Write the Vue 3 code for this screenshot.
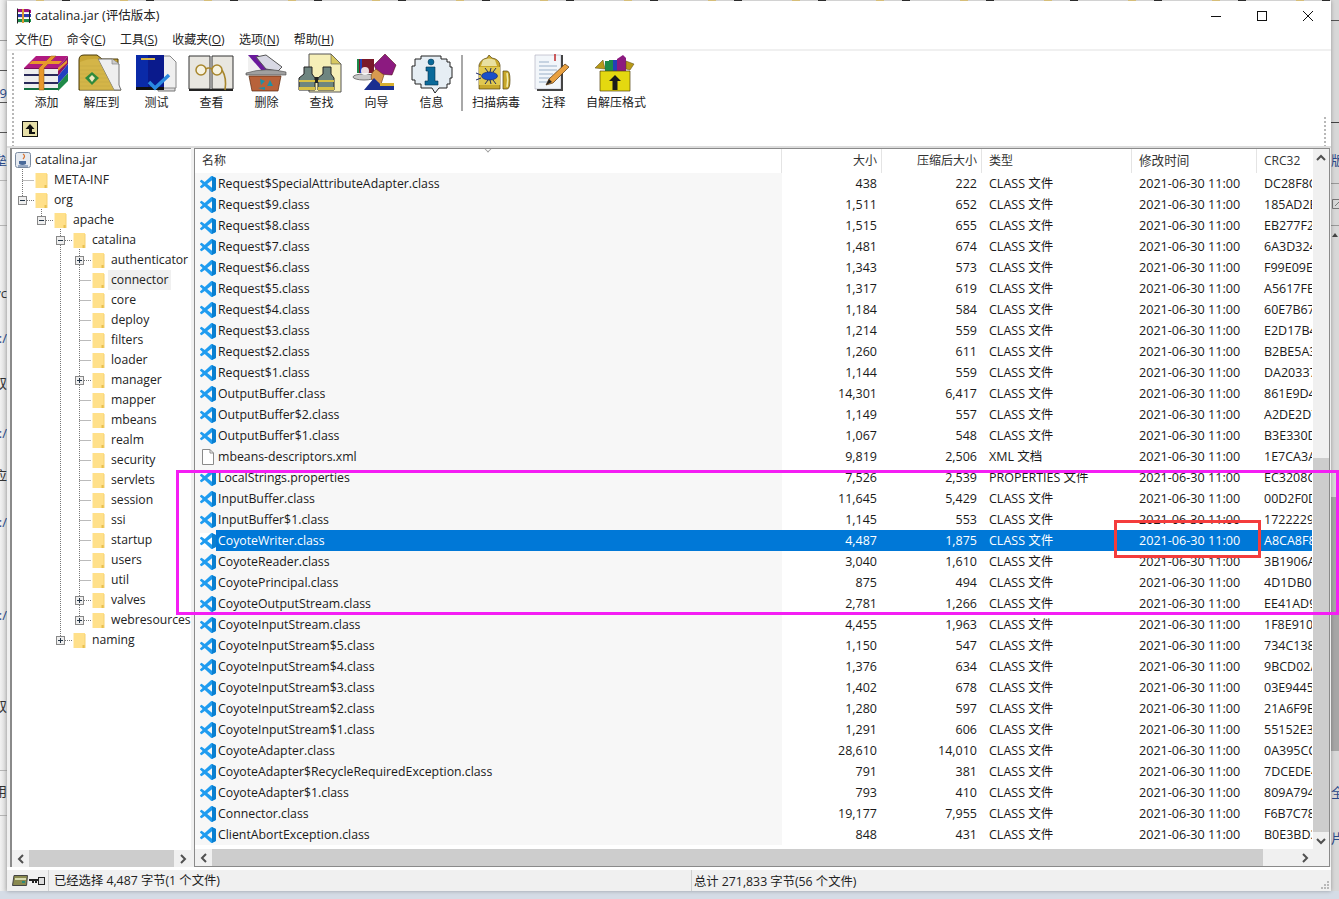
<template>
  <div class="desk">
    <div class="topstrip"></div>
    <div class="side left">
      <span class="bit" v-for="b in leftBits" :key="b.y" :class="{ dark: b.dark }" :style="{ top: b.y + 'px' }">{{ b.t }}</span>
    </div>
    <div class="side right">
      <span class="backthumb"></span>
      <svg class="backicon" width="8" height="12" viewBox="0 0 8 12"><path d="M8 1.500H1.500v9H8M4 8l4-4" stroke="#777" fill="none" /></svg>
      <span class="backup"></span>
      <span class="bit" v-for="b in rightBits" :key="b.y" :style="{ top: b.y + 'px' }">{{ b.t }}</span>
    </div>

    <div class="window">
      <div class="titlebar">
        <svg class="appicon" viewBox="0 0 16 16" width="16" height="16">
          <path d="M2 1h10l3 1v3H2z" fill="#a0137c" />
          <path d="M2 4h11v1H2zM2 9h11v1H2zM2 14h11v1H2z" fill="#e8e8e8" />
          <path d="M2 6h13v3H2z" fill="#2a3cb0" />
          <path d="M2 11h13v3H2z" fill="#1d8a4a" />
          <path d="M1.500 .5v15M13.500 2v13" stroke="#222" fill="none" />
          <path d="M6 1h2v14H6z" fill="#d89a30" />
        </svg>
        <span class="title">catalina.jar (评估版本)</span>
        <div class="winbtns">
          <svg width="46" height="30" viewBox="0 0 46 30"><path d="M18 15.500h10" stroke="#111" fill="none" /></svg>
          <svg width="46" height="30" viewBox="0 0 46 30"><rect x="18.500" y="10.500" width="9" height="9" stroke="#111" fill="none" /></svg>
          <svg width="46" height="30" viewBox="0 0 46 30"><path d="M18 10l10 10M28 10L18 20" stroke="#111" fill="none" /></svg>
        </div>
      </div>

      <div class="menubar">
        <span v-for="m in menus" :key="m.label" class="menu">{{ m.label }}(<u>{{ m.key }}</u>)</span>
      </div>

      <div class="toolarea">
        <div class="grip"></div>
        <div class="toolstack">
          <div class="toolbar">
            <template v-for="t in tools" :key="t.id">
              <div v-if="t.id === 'sep'" class="toolsep"></div>
              <div v-else class="tool" :style="{ width: t.w + 'px' }">
                <svg class="toolicon" viewBox="0 0 48 40" width="48" height="40">
                  <g v-if="t.id === 'add'">
                    <path d="M2 15h34v22H2z" fill="#eee" />
                    <path d="M2 15L14 3h32L36 15z" fill="#b01a80" />
                    <path d="M2 21h34v2H2zM2 29h34v2H2z" fill="#2a2a5a" />
                    <path d="M2 15h34v1H2z" fill="#7a0f5c" />
                    <path d="M2 35h34v2H2z" fill="#147040" />
                    <path d="M36 15L46 3v8L36 23z" fill="#8c1268" />
                    <path d="M36 23l10-12v9L36 31z" fill="#2440c0" />
                    <path d="M36 31l10-11v8L36 38z" fill="#1f8a48" />
                    <path d="M17 15L29 3h5L22 15v22h-5z" fill="#e8982c" stroke="#8a5a10" stroke-width=".5" />
                    <path d="M7 11h30l3-3H10z" fill="#e8982c" />
                    <path d="M36 15l9-8v3l-9 8z" fill="#e8982c" />
                  </g>
                  <g v-else-if="t.id === 'extract'">
                    <path d="M2 7q0-5 5-5h13l5 4 16 0v27l3 4H2z" fill="#c8a636" stroke="#4a3a08" />
                    <path d="M3 13h30M3 17h30M3 21h30M3 25h30M3 29h30M3 33h30" stroke="#a88a28" />
                    <path d="M21 6h14l7 5v21l2 5h-7z" fill="#eeeeee" stroke="#777" />
                    <path d="M35 6v5h7" fill="#ccc" stroke="#777" stroke-width=".6" />
                    <path d="M21 6l16 31H3V9q9-4 18-3z" fill="#d8bc50" opacity=".7" />
                    <path d="M15 19l7 6-7 7-7-7z" fill="#2f8a3c" />
                    <path d="M15 22l3 3-3 4-3-4z" fill="#f0e8c0" />
                  </g>
                  <g v-else-if="t.id === 'test'">
                    <path d="M26 6h10l7 6v26H26z" fill="#dcdcdc" stroke="#777" />
                    <path d="M30 3h8l6 6v26H30z" fill="#efefef" stroke="#888" />
                    <path d="M4 2h28v32H4z" fill="#0a1a8c" />
                    <path d="M4 2h12v32H4z" fill="#0a2aa8" />
                    <path d="M9 6h14" stroke="#d8b84a" stroke-width="2" />
                    <path d="M4 34h28v3H4z" fill="#111" />
                    <path d="M17 29l6 6 14-13" stroke="#2a8ae0" stroke-width="3.500" fill="none" />
                  </g>
                  <g v-else-if="t.id === 'view'">
                    <path d="M2 3h21v33H2zM25 3h21v33H25z" fill="#e8e6e0" stroke="#333" />
                    <path d="M23 3h2v33h-2z" fill="#999" />
                    <path d="M2 36h44v2H2z" fill="#222" />
                    <circle cx="14" cy="17" r="5" fill="#f6f2e0" stroke="#a8862c" stroke-width="1.500" />
                    <circle cx="30" cy="17" r="5" fill="#f6f2e0" stroke="#a8862c" stroke-width="1.500" />
                    <path d="M19 16q2-2 6 0M35 17q5 8 3 20" stroke="#a8862c" stroke-width="1.600" fill="none" />
                  </g>
                  <g v-else-if="t.id === 'del'">
                    <path d="M6 2h10l14 16H6z" fill="#6a1a9c" />
                    <path d="M6 2l14 16H6z" fill="#f0f0f0" />
                    <path d="M14 4l10-2 16 12-4 4-12-2z" fill="#d8d8e4" stroke="#555" />
                    <path d="M4 20q20-6 40-1v3H4z" fill="#a0a0a0" stroke="#444" stroke-width=".6" />
                    <path d="M7 23h32l-3 15H10z" fill="#b8623a" stroke="#5a2a10" stroke-width=".7" />
                    <path d="M18 26l5 2-4 4zM28 27l3 6-6 0zM16 35l7-1 0 3z" fill="#1a90a8" />
                  </g>
                  <g v-else-if="t.id === 'find'">
                    <path d="M12 1h22l10 10v28H12z" fill="#f6efb8" stroke="#555" />
                    <path d="M34 1v10h10z" fill="#d8c860" stroke="#555" stroke-width=".6" />
                    <path d="M7 14h8v7l3 4v12H2V25l5-4z" fill="#6e8580" stroke="#222" />
                    <path d="M26 14h8v7l3 4v12H21V25l5-4z" fill="#6e8580" stroke="#222" />
                    <path d="M2 27h16v2H2zM21 27h16v2H21zM2 34h16v3H2zM21 34h16v3H21z" fill="#d8c048" />
                    <path d="M18 24h3v6h-3z" fill="#222" />
                  </g>
                  <g v-else-if="t.id === 'wizard'">
                    <path d="M5 6h17v14H5z" fill="#7a1a2a" />
                    <path d="M5 6h2v14H5z" fill="#1d8a4a" />
                    <path d="M8 6h2v14H8z" fill="#2440b8" />
                    <ellipse cx="12" cy="24" rx="11" ry="3" fill="#c8c8c8" stroke="#777" />
                    <circle cx="13" cy="18" r="4" fill="#fff" opacity=".85" />
                    <path d="M22 12L33 1l11 11-4 10-14-1z" fill="#8c1a80" stroke="#400" stroke-width=".5" />
                    <path d="M24 16l8 6-3 9-9-4q-3-6 4-11z" fill="#d89a50" stroke="#6a3a10" stroke-width=".6" />
                    <path d="M12 37l10-12 8 8 12-2v6z" fill="#1a2f90" />
                    <path d="M28 30h14v3H28z" fill="#d8b030" />
                  </g>
                  <g v-else-if="t.id === 'info'">
                    <path d="M8 6h6V3h20v3h6v3h3v5h2v11h-2v6h-3v4H32l-4 5-3-5H14v-4H8v-4H5V13h3z" fill="#e6eef4" stroke="#222" />
                    <circle cx="24" cy="9" r="3" fill="#0a6a9a" stroke="#03304a" stroke-width=".5" />
                    <path d="M19 14h9v14h3v4H18v-4h3v-10h-2z" fill="#0a6a9a" stroke="#03304a" stroke-width=".6" />
                  </g>
                  <g v-else-if="t.id === 'scan'">
                    <path d="M8 12q2-6 8-7l2-3 3 3q7 1 8 7v24H8z" fill="#c8a82c" stroke="#554410" stroke-width=".7" />
                    <path d="M12 7q6-3 12 0l2 6H10z" fill="#e8e0a0" />
                    <path d="M8 14h21v18H8z" fill="#e0c850" />
                    <ellipse cx="18.500" cy="23" rx="8" ry="4" fill="#1a50c8" stroke="#0a1a60" stroke-width=".6" />
                    <path d="M14 15l3 4M20 15l-1 4M25 15l-3 4M14 31l3-4M20 31l-1-4M25 31l-3-4M5 20l5 2M5 27l5-2" stroke="#0a1a60" stroke-width=".9" />
                    <path d="M32 18h4q3 0 3 9t-3 9h-4z" fill="#c8a82c" stroke="#554410" stroke-width=".7" />
                    <path d="M36 20q1.500 7 0 14" stroke="#f4f0b0" stroke-width="1.500" fill="none" />
                  </g>
                  <g v-else-if="t.id === 'note'">
                    <path d="M6 2h26v34H6z" fill="#f2f6fa" stroke="#aab" stroke-width=".6" />
                    <path d="M32 2h2v36H8v-2h24z" fill="#444" />
                    <path d="M10 9h10M10 13h18M10 17h18M10 21h14M10 25h12M10 29h8" stroke="#9ab0c8" />
                    <path d="M26 1v7" stroke="#c02a2a" stroke-width="1.500" />
                    <path d="M17 32l3-6 16-15 4 3-16 16z" fill="#e8a040" stroke="#553310" stroke-width=".7" />
                    <path d="M17 32l3-6 3 3z" fill="#222" />
                  </g>
                  <g v-else-if="t.id === 'sfx'">
                    <path d="M14 8h4v14h-4zM18 7h4v15h-4z" fill="#1d8a4a" />
                    <path d="M22 7h4v15h-4z" fill="#2440b8" />
                    <path d="M26 6l6-4 3 3v17h-9z" fill="#8c1a80" />
                    <path d="M4 15l8-8 2 9zM35 8l8 3-4 6-4-1z" fill="#b89a18" stroke="#554410" stroke-width=".5" />
                    <path d="M9 18h30v20H9z" fill="#e4d810" stroke="#554410" stroke-width=".7" />
                    <path d="M24 22l6 6h-3.500v9h-5v-9H18z" fill="#1a1a1a" />
                  </g>
                </svg>
                <span class="toollabel">{{ t.label }}</span>
              </div>
            </template>
          </div>
          <div class="upbar">
            <svg width="16" height="16" viewBox="0 0 16 16">
              <rect x=".5" y=".5" width="15" height="15" fill="#e6dfa8" stroke="#111" />
              <path d="M8 3l4.500 5H10v3h3v2H7V8H3.500z" fill="#111" />
            </svg>
          </div>
        </div>
        <div class="grip endgrip"></div>
      </div>

      <div class="panes">
        <div class="treepane">
          <div class="treebody">
            <svg class="treelines" width="180" height="500">
              <path :d="treeLines" stroke="#777" stroke-dasharray="1 1" fill="none" />
            </svg>
            <div class="node" v-for="n in tree" :key="n.name">
              <span v-if="!n.root" class="spacer" :style="{ width: n.depth * 19 + 'px' }"></span>
              <span v-if="!n.root" class="toggle">
                <svg v-if="n.toggle" width="9" height="9" viewBox="0 0 9 9">
                  <rect x=".5" y=".5" width="8" height="8" fill="#eee" stroke="#888" />
                  <path d="M2 4.500h5" stroke="#234" />
                  <path v-if="n.toggle === 'plus'" d="M4.500 2v5" stroke="#234" />
                </svg>
              </span>
              <svg v-if="n.root" class="jaricon" width="16" height="16" viewBox="0 0 16 16">
                <rect x=".5" y=".5" width="15" height="15" rx="2" fill="#e6eaf0" stroke="#7a8aa0" />
                <path d="M8 2q3 2 0 5" stroke="#d8702a" fill="none" stroke-width="1.200" />
                <path d="M4 9h7v3q-3.500 2-7 0z" fill="#4a6a9a" />
                <path d="M3 14h10" stroke="#4a6a9a" />
              </svg>
              <svg v-else class="foldericon" width="13" height="16" viewBox="0 0 13 16">
                <path d="M.5 1h11.500v15H.5z" fill="#ffe08a" />
                <path d="M9.500 13h2.500v3H9.500z" fill="#e8c050" />
                <path d="M11.500 2h1v14h-1z" fill="#f6d272" />
              </svg>
              <span class="nodename" :class="{ current: n.name === 'connector', rootname: n.root }">{{ n.name }}</span>
            </div>
          </div>
          <div class="hscroll">
            <span class="arrow"><svg width="8" height="10" viewBox="0 0 8 10"><path d="M6 1L2 5l4 4" stroke="#505050" stroke-width="2" fill="none" /></svg></span>
            <span class="thumb"></span>
            <span class="arrow"><svg width="8" height="10" viewBox="0 0 8 10"><path d="M2 1l4 4-4 4" stroke="#505050" stroke-width="2" fill="none" /></svg></span>
          </div>
        </div>

        <div class="listpane">
          <div class="listmain">
            <div class="listhead">
              <div class="cell col-name hcell">名称<span class="sortmark"></span></div>
              <div class="cell col-size hcell num">大小</div>
              <div class="cell col-packed hcell num">压缩后大小</div>
              <div class="cell col-type hcell">类型</div>
              <div class="cell col-time hcell">修改时间</div>
              <div class="cell col-crc hcell">CRC32</div>
            </div>
            <div class="listrows">
              <div class="row" v-for="f in files" :key="f.name" :class="{ selected: f.name === selectedName }">
                <div class="cell col-name namecell">
                  <svg v-if="f.kind === 'class' || f.kind === 'prop'" class="fileicon" width="16" height="16" viewBox="0 0 24 24">
                    <path d="M23.150 2.587L18.210.21a1.494 1.494 0 0 0-1.705.29l-9.460 8.630-4.120-3.128a.999.999 0 0 0-1.276.057L.327 7.261A1 1 0 0 0 .326 8.740L3.899 12 .326 15.260a1 1 0 0 0 .001 1.479L1.650 17.940a.999.999 0 0 0 1.276.057l4.120-3.128 9.460 8.630a1.492 1.492 0 0 0 1.704.29l4.942-2.377A1.500 1.500 0 0 0 24 20.060V3.939a1.500 1.500 0 0 0-.850-1.352zm-5.146 14.861L10.826 12l7.178-5.448v10.896z" fill="#1f9cf0" />
                    <path d="M18 .12l5.150 2.467A1.500 1.500 0 0 1 24 3.939v16.121a1.500 1.500 0 0 1-.850 1.352L18 23.880z" fill="#0a7fd0" />
                  </svg>
                  <svg v-else class="fileicon" width="16" height="16" viewBox="0 0 16 16">
                    <path d="M2.500 .5h7.500l3.500 3.500v11.500h-11z" fill="#fff" stroke="#8a8a8a" />
                    <path d="M10 .5v3.500h3.500" fill="none" stroke="#8a8a8a" />
                  </svg>
                  <span class="fname">{{ f.name }}</span>
                </div>
                <div class="cell col-size num">{{ f.size }}</div>
                <div class="cell col-packed num">{{ f.packed }}</div>
                <div class="cell col-type">{{ f.type }}</div>
                <div class="cell col-time">2021-06-30 11:00</div>
                <div class="cell col-crc">{{ f.crc }}</div>
              </div>
            </div>
            <div class="hscroll listscroll">
              <span class="arrow"><svg width="8" height="10" viewBox="0 0 8 10"><path d="M6 1L2 5l4 4" stroke="#505050" stroke-width="2" fill="none" /></svg></span>
              <span class="thumb"></span>
              <span class="arrow"><svg width="8" height="10" viewBox="0 0 8 10"><path d="M2 1l4 4-4 4" stroke="#505050" stroke-width="2" fill="none" /></svg></span>
            </div>
          </div>
          <div class="vscroll">
            <span class="varrow"><svg width="10" height="8" viewBox="0 0 10 8"><path d="M1 6l4-4 4 4" stroke="#505050" stroke-width="2" fill="none" /></svg></span>
            <span class="vgap"></span>
            <span class="vthumb"></span>
            <span class="varrow"><svg width="10" height="8" viewBox="0 0 10 8"><path d="M1 2l4 4 4-4" stroke="#505050" stroke-width="2" fill="none" /></svg></span>
            <span class="vcorner"></span>
          </div>
        </div>
      </div>

      <div class="statusbar">
        <div class="status-icons">
          <svg width="16" height="11" viewBox="0 0 16 11">
            <path d="M2 .5h13.500l-1 10H.5z" fill="#8a8a50" stroke="#444" />
            <rect x="3" y="3" width="11" height="2" fill="#d8dcb0" />
            <rect x="10" y="6" width="3" height="2" fill="#2a8a7a" />
          </svg>
          <svg width="16" height="8" viewBox="0 0 16 8">
            <path d="M0 2h9v2H8v2H6V4H5v2H3V4H0z" fill="#222" />
            <rect x="9.500" y=".5" width="6" height="7" fill="#ddd" stroke="#222" />
          </svg>
        </div>
        <div class="status-left">已经选择 4,487 字节(1 个文件)</div>
        <div class="status-right">总计 271,833 字节(56 个文件)</div>
        <svg class="sizegrip" width="10" height="10" viewBox="0 0 10 10">
          <path d="M7 1h2v2H7zM4 4h2v2H4zM7 4h2v2H7zM1 7h2v2H1zM4 7h2v2H4zM7 7h2v2H7z" fill="#b8b8b8" />
        </svg>
      </div>
    </div>

    <div class="mark magenta"></div>
    <div class="mark red"></div>
  </div>
</template>

<script setup>
const menus = [
  { label: '文件', key: 'F' },
  { label: '命令', key: 'C' },
  { label: '工具', key: 'S' },
  { label: '收藏夹', key: 'O' },
  { label: '选项', key: 'N' },
  { label: '帮助', key: 'H' }
];

const tools = [
  { id: 'add', label: '添加', w: 55 },
  { id: 'extract', label: '解压到', w: 55 },
  { id: 'test', label: '测试', w: 55 },
  { id: 'view', label: '查看', w: 55 },
  { id: 'del', label: '删除', w: 55 },
  { id: 'find', label: '查找', w: 55 },
  { id: 'wizard', label: '向导', w: 55 },
  { id: 'info', label: '信息', w: 55 },
  { id: 'sep' },
  { id: 'scan', label: '扫描病毒', w: 60 },
  { id: 'note', label: '注释', w: 55 },
  { id: 'sfx', label: '自解压格式', w: 70 }
];

const tree = [
  { name: 'catalina.jar', depth: 0, root: true },
  { name: 'META-INF', depth: 0 },
  { name: 'org', depth: 0, toggle: 'minus' },
  { name: 'apache', depth: 1, toggle: 'minus' },
  { name: 'catalina', depth: 2, toggle: 'minus' },
  { name: 'authenticator', depth: 3, toggle: 'plus' },
  { name: 'connector', depth: 3 },
  { name: 'core', depth: 3 },
  { name: 'deploy', depth: 3 },
  { name: 'filters', depth: 3 },
  { name: 'loader', depth: 3 },
  { name: 'manager', depth: 3, toggle: 'plus' },
  { name: 'mapper', depth: 3 },
  { name: 'mbeans', depth: 3 },
  { name: 'realm', depth: 3 },
  { name: 'security', depth: 3 },
  { name: 'servlets', depth: 3 },
  { name: 'session', depth: 3 },
  { name: 'ssi', depth: 3 },
  { name: 'startup', depth: 3 },
  { name: 'users', depth: 3 },
  { name: 'util', depth: 3 },
  { name: 'valves', depth: 3, toggle: 'plus' },
  { name: 'webresources', depth: 3, toggle: 'plus' },
  { name: 'naming', depth: 2, toggle: 'plus' }
];

// dotted guides of the tree, offsets relative to the tree body
const treeLines = (() => {
  let d = 'M11.500 19V46M11.500 30.500H23M16 50.500H23M30.500 55V66M35 70.500H42M49.500 75V486M54 90.500H61M54 490.500H61M68.500 95V466';
  for (let i = 5; i < 24; i++) {
    const start = tree[i].toggle ? 73 : 68.5;
    d += `M${start} ${i * 20 + 10.5}H80`;
  }
  return d;
})();

const leftBits = [
  { y: 85, t: '9' }, { y: 152, t: '垒' }, { y: 285, t: 'vc', dark: true }, { y: 330, t: ':/' },
  { y: 375, t: '双', dark: true }, { y: 425, t: ':/' }, { y: 467, t: '应', dark: true }, { y: 514, t: ':/' },
  { y: 607, t: ':/' }, { y: 698, t: '双', dark: true }, { y: 783, t: '用', dark: true }
];
const rightBits = [
  { y: 152, t: '版' }, { y: 784, t: '全' }, { y: 830, t: '片' }
];

const mk = (name, size, packed, crc, type = 'CLASS 文件', kind = 'class') => ({ name, size, packed, crc, type, kind });

const selectedName = 'CoyoteWriter.class';

const files = [
  mk('Request$SpecialAttributeAdapter.class', '438', '222', 'DC28F8C'),
  mk('Request$9.class', '1,511', '652', '185AD2E'),
  mk('Request$8.class', '1,515', '655', 'EB277F2'),
  mk('Request$7.class', '1,481', '674', '6A3D324'),
  mk('Request$6.class', '1,343', '573', 'F99E09E'),
  mk('Request$5.class', '1,317', '619', 'A5617FE'),
  mk('Request$4.class', '1,184', '584', '60E7B67'),
  mk('Request$3.class', '1,214', '559', 'E2D17B4'),
  mk('Request$2.class', '1,260', '611', 'B2BE5A3'),
  mk('Request$1.class', '1,144', '559', 'DA20337'),
  mk('OutputBuffer.class', '14,301', '6,417', '861E9D4'),
  mk('OutputBuffer$2.class', '1,149', '557', 'A2DE2D7'),
  mk('OutputBuffer$1.class', '1,067', '548', 'B3E330D'),
  mk('mbeans-descriptors.xml', '9,819', '2,506', '1E7CA3A', 'XML 文档', 'xml'),
  mk('LocalStrings.properties', '7,526', '2,539', 'EC3208C', 'PROPERTIES 文件', 'prop'),
  mk('InputBuffer.class', '11,645', '5,429', '00D2F0D'),
  mk('InputBuffer$1.class', '1,145', '553', '1722229'),
  mk('CoyoteWriter.class', '4,487', '1,875', 'A8CA8F8'),
  mk('CoyoteReader.class', '3,040', '1,610', '3B1906A'),
  mk('CoyotePrincipal.class', '875', '494', '4D1DB07'),
  mk('CoyoteOutputStream.class', '2,781', '1,266', 'EE41AD9'),
  mk('CoyoteInputStream.class', '4,455', '1,963', '1F8E910'),
  mk('CoyoteInputStream$5.class', '1,150', '547', '734C138'),
  mk('CoyoteInputStream$4.class', '1,376', '634', '9BCD02A'),
  mk('CoyoteInputStream$3.class', '1,402', '678', '03E9445'),
  mk('CoyoteInputStream$2.class', '1,280', '597', '21A6F9B'),
  mk('CoyoteInputStream$1.class', '1,291', '606', '55152E3'),
  mk('CoyoteAdapter.class', '28,610', '14,010', '0A395CC'),
  mk('CoyoteAdapter$RecycleRequiredException.class', '791', '381', '7DCEDE4'),
  mk('CoyoteAdapter$1.class', '793', '410', '809A794'),
  mk('Connector.class', '19,177', '7,955', 'F6B7C78'),
  mk('ClientAbortException.class', '848', '431', 'B0E3BD3')
];
</script>

<style scoped>
.desk {
  position: relative;
  width: 1339px;
  height: 899px;
  overflow: hidden;
  background: #d5dce6;
  font-family: "Open Sans", "Noto Sans", "Noto Sans CJK SC", sans-serif;
  font-size: 12.5px;
  color: #1a1a1a;
}

.topstrip {
  position: absolute;
  left: 0;
  top: 0;
  right: 0;
  height: 2px;
  background: repeating-linear-gradient(90deg, #f0f0f0 0 36px, #f4d98a 36px 44px, #f0f0f0 44px 62px, #333 62px 70px, #f0f0f0 70px 84px);
}

.side {
  position: absolute;
  top: 0;
  bottom: 8px;
  overflow: hidden;
}

.side.left {
  left: 0;
  width: 7px;
  background:
    linear-gradient(180deg, transparent 40px, #9a9a9a 40px 41px, transparent 41px 70px, #555 70px 71px, transparent 71px 102px, #555 102px 103px, transparent 103px 132px, #555 132px 133px, transparent 133px 180px, #b5b5b5 180px 181px, transparent 181px 225px, #b5b5b5 225px 226px, transparent 226px 770px, #b5b5b5 770px 771px, transparent 771px 815px, #b5b5b5 815px 816px, transparent 816px),
    linear-gradient(90deg, #f2f2f2, #d8d8d8);
}

.side.right {
  right: 0;
  width: 8px;
  background:
    linear-gradient(180deg, #d8d8d8 20px, #555 20px 21px, #d8d8d8 21px 122px, #444 122px 123px, #d8d8d8 123px 183px, #999 183px 184px, #d8d8d8 184px 225px, #999 225px 226px, #d8d8d8 226px);
}

.backthumb {
  position: absolute;
  left: 0;
  top: 497px;
  width: 8px;
  height: 254px;
  background: #a6a6a6;
}

.backicon {
  position: absolute;
  left: 0;
  top: 198px;
}

.backup {
  position: absolute;
  left: 1px;
  top: 233px;
  border-left: 3px solid transparent;
  border-right: 3px solid transparent;
  border-bottom: 4px solid #444;
}

.bit {
  position: absolute;
  color: #2a4a8a;
  font-size: 13px;
  line-height: 16px;
  white-space: nowrap;
}

.bit.dark {
  color: #333;
}

.left .bit {
  right: 0;
}

.right .bit {
  left: 0;
}

.window {
  position: absolute;
  left: 7px;
  top: 1px;
  width: 1324px;
  height: 890px;
  display: flex;
  flex-direction: column;
  background: #fff;
  box-shadow: 0 0 4px rgba(0, 0, 0, 0.3);
}

.titlebar {
  height: 30px;
  display: flex;
  align-items: center;
  padding-left: 9px;
  flex: none;
}

.appicon {
  margin: -1px 3px 0 0;
}

.title {
  color: #222;
  margin-top: -4px;
}

.winbtns {
  margin-left: auto;
  display: flex;
}

.winbtns svg {
  display: block;
}

.menubar {
  height: 18px;
  padding: 0 0 2px 8px;
  box-sizing: border-box;
  display: flex;
  align-items: center;
  gap: 14.500px;
  flex: none;
  color: #222;
  font-size: 12px;
}

.menu u {
  text-underline-offset: 1px;
}

.toolarea {
  height: 95px;
  display: flex;
  flex: none;
  border-top: 2px solid #f0f0f0;
  border-bottom: 2px solid #dcdcdc;
  box-sizing: content-box;
}

.grip {
  width: 2px;
  margin: 2px 0 0 5px;
  background: repeating-linear-gradient(180deg, #b8b8b8 0 2px, transparent 2px 4px);
}

.endgrip {
  margin: 66px 5px 0 0;
}

.toolstack {
  flex: 1;
  display: flex;
  flex-direction: column;
}

.toolbar {
  display: flex;
  height: 69px;
  padding: 2px 0 0 5px;
  box-sizing: border-box;
}

.tool {
  display: flex;
  flex-direction: column;
  align-items: center;
  flex: none;
}

.toolicon {
  display: block;
  margin-right: 2px;
}

.toollabel {
  margin-top: 1px;
  line-height: 17px;
  font-size: 12px;
  white-space: nowrap;
  color: #222;
}

.toolsep {
  width: 2px;
  height: 56px;
  margin: 2px 3px 0 2px;
  background: #a8a8a8;
  flex: none;
}

.upbar {
  padding: 1px 0 0 8px;
}

.upbar svg {
  display: block;
}

.panes {
  flex: 1;
  min-height: 0;
  display: flex;
  gap: 3px;
  padding: 0 1px 0 3px;
  background: #f0f0f0;
}

.treepane {
  width: 181px;
  flex: none;
  display: flex;
  flex-direction: column;
  background: #fff;
  border-left: 2px solid #8a8a8a;
  border-top: 1px solid #8a8a8a;
  box-sizing: border-box;
}

.treebody {
  position: relative;
  flex: 1;
  overflow: hidden;
  margin-left: -1px;
  padding-top: 1px;
}

.treelines {
  position: absolute;
  left: 0;
  top: 1px;
}

.node {
  position: relative;
  display: flex;
  align-items: center;
  height: 20px;
  white-space: nowrap;
  padding-left: 4px;
  font-size: 12.2px;
}

.spacer {
  flex: none;
}

.toggle {
  width: 20px;
  flex: none;
  display: flex;
  align-items: center;
  padding-left: 3px;
  box-sizing: border-box;
}

.toggle svg {
  display: block;
  background: #fff;
}

.jaricon,
.foldericon {
  flex: none;
}

.nodename {
  margin-left: 3px;
  padding: 0 3px;
  line-height: 20px;
  color: #222;
}

.nodename.current {
  background: #f0f0f0;
}

.nodename.rootname {
  margin-left: 1px;
}

.hscroll {
  height: 17px;
  flex: none;
  display: flex;
  align-items: center;
  background: #f0f0f0;
}

.arrow {
  width: 17px;
  flex: none;
  display: flex;
  align-items: center;
  justify-content: center;
}

.thumb {
  flex: 1;
  height: 100%;
  background: #cdcdcd;
}

.listscroll .thumb {
  flex: none;
  width: 1051px;
}

.listscroll .arrow:last-child {
  margin-left: auto;
}

.listpane {
  flex: 1;
  min-width: 0;
  display: flex;
  background: #fff;
  border: 1px solid #8a8a8a;
  box-sizing: border-box;
}

.listmain {
  flex: 1;
  min-width: 0;
  display: flex;
  flex-direction: column;
}

.listhead {
  display: flex;
  height: 24px;
  flex: none;
}

.listrows {
  flex: 1;
  overflow: hidden;
}

.row {
  display: flex;
  height: 21px;
}

.cell {
  box-sizing: border-box;
  line-height: 21px;
  white-space: nowrap;
  overflow: hidden;
  flex: none;
  padding: 0 5px;
}

.hcell {
  line-height: 23px;
  border-right: 1px solid #e4e4e4;
  color: #333;
  font-size: 12px;
}

.hcell.num {
  padding-right: 4px;
}

.hcell.col-crc {
  border-right: 0;
}

.col-name {
  width: 587px;
}

.col-size,
.col-packed {
  width: 100px;
}

.col-type {
  width: 150px;
  padding-left: 7px;
}

.col-time {
  width: 125px;
  padding-left: 7px;
  font-size: 12.6px;
}

.col-crc {
  width: 55px;
  padding-left: 7px;
}

.num {
  text-align: right;
}

.namecell {
  display: flex;
  align-items: center;
  background: #f7f7f7;
  padding: 0 0 0 5px;
}

.fileicon {
  flex: none;
  background: #f7f7f7;
}

.row.selected .fileicon {
  background: #fff;
}

.fname {
  flex: 1;
  height: 21px;
  padding-left: 2px;
  font-size: 12.3px;
}

.hcell.col-name {
  position: relative;
  padding-left: 7px;
  overflow: visible;
}

.sortmark {
  position: absolute;
  left: 290px;
  top: -3px;
  width: 5px;
  height: 5px;
  border-right: 1px solid #999;
  border-bottom: 1px solid #999;
  transform: rotate(45deg) scale(0.8);
}

.row.selected .fname,
.row.selected .cell:not(.namecell) {
  background: #0078d7;
  color: #fff;
}

.vscroll {
  width: 16px;
  flex: none;
  display: flex;
  flex-direction: column;
  align-items: stretch;
  background: #f0f0f0;
}

.varrow {
  height: 17px;
  flex: none;
  display: flex;
  align-items: center;
  justify-content: center;
}

.vgap {
  height: 292px;
  flex: none;
}

.vthumb {
  flex: 1;
  background: #cdcdcd;
}

.vcorner {
  height: 17px;
  flex: none;
  background: #f0f0f0;
}

.statusbar {
  height: 22px;
  flex: none;
  display: flex;
  align-items: center;
  background: #f0f0f0;
  border-top: 1px solid #fff;
  box-sizing: border-box;
  color: #222;
  margin-top: 2px;
  font-size: 12.3px;
}

.status-icons {
  width: 42px;
  height: 100%;
  display: flex;
  align-items: center;
  gap: 1px;
  padding-left: 5px;
  box-sizing: border-box;
  border-right: 1px solid #d0d0d0;
  flex: none;
}

.status-left {
  width: 643px;
  height: 100%;
  line-height: 21px;
  padding-left: 5px;
  box-sizing: border-box;
  border-right: 1px solid #d0d0d0;
  flex: none;
}

.status-right {
  padding-left: 2px;
  flex: 1;
}

.sizegrip {
  flex: none;
  align-self: flex-end;
  margin: 0 1px 1px 0;
}

.mark {
  position: absolute;
  pointer-events: none;
  box-sizing: border-box;
}

.magenta {
  left: 176px;
  top: 470px;
  width: 1163px;
  height: 145px;
  border: 3px solid #f41ef4;
}

.red {
  left: 1114px;
  top: 520px;
  width: 147px;
  height: 38px;
  border: 3px solid #f43c3c;
}
</style>
